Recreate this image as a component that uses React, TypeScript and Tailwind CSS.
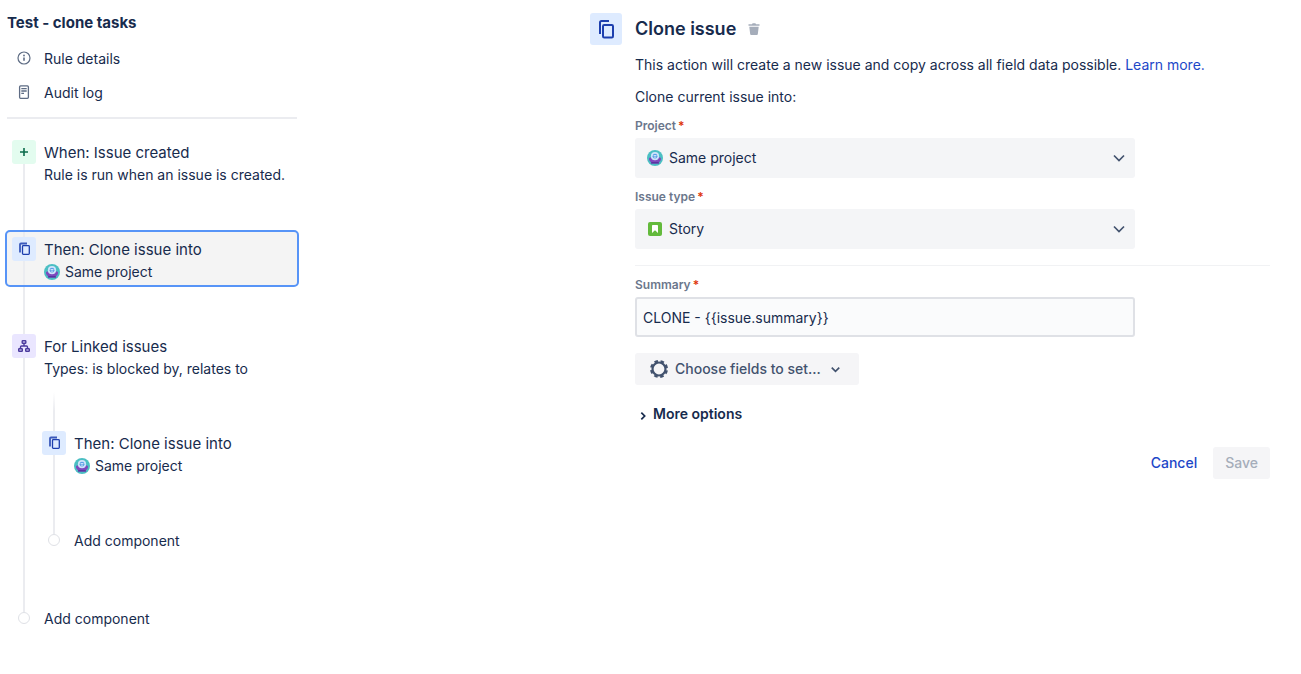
import React from "react";
import type { ReactNode } from "react";

function CopyIcon({ className }: { className: string }) {
  return (
    <svg viewBox="0 0 24 24" className={className} fill="none" stroke="#1d3fae" strokeWidth="2" aria-hidden="true">
      <path d="M6 17V5.500A1.500 1.500 0 0 1 7.500 4H15" />
      <rect x="9" y="8" width="10" height="12.500" rx="1.200" />
    </svg>
  );
}

function SmallCopyIcon() {
  return (
    <svg viewBox="0 0 24 24" className="size-6" fill="none" stroke="#1d3fae" aria-hidden="true">
      <path d="M8 15.500V7.500A1 1 0 0 1 9 6.500h6" strokeWidth="1.800" strokeOpacity="0.850" />
      <rect x="10.500" y="8.700" width="6.800" height="8.600" rx="0.800" strokeWidth="1.300" />
    </svg>
  );
}

function PlusIcon() {
  return (
    <svg viewBox="0 0 24 24" className="size-6" stroke="#0b6b4b" strokeWidth="1.6" aria-hidden="true">
      <path d="M12 8v8M8 12h8" />
    </svg>
  );
}

function BranchIcon() {
  return (
    <svg viewBox="0 0 24 24" className="size-6" fill="none" stroke="#4b3a9e" strokeWidth="1.4" aria-hidden="true">
      <rect x="10.2" y="6.7" width="3.6" height="2.6" rx="0.6" />
      <rect x="6.7" y="14.7" width="3.6" height="2.6" rx="0.6" />
      <rect x="13.7" y="14.7" width="3.6" height="2.6" rx="0.6" />
      <path d="M12 9.3V12M8.5 14.7V13a1 1 0 0 1 1-1h5a1 1 0 0 1 1 1v1.7" />
    </svg>
  );
}

function ProjectAvatar() {
  return (
    <svg viewBox="0 0 16 16" className="size-4 shrink-0" aria-hidden="true">
      <circle cx="8" cy="8" r="8" fill="#4bbfc3" />
      <path d="M2 8.400a1.300 1.300 0 0 1 1.600-.9h8.800a1.300 1.300 0 0 1 1.600.9c.2 1.900-.9 3.100-2.300 3.700l.6 1.500H3.700l.6-1.500C2.900 11.500 1.800 10.300 2 8.400z" fill="#7d48bd" />
      <path d="M4.500 12h7l.7 1.600H3.800z" fill="#5a349f" />
      <circle cx="8" cy="6.200" r="4.100" fill="#cfe3fa" />
      <circle cx="8" cy="6.200" r="2.400" fill="#5b9fe6" />
      <path d="M6.600 5.500h2.800M6.800 7.100h2.400" stroke="#e8f4ff" strokeWidth="0.800" />
    </svg>
  );
}

function StoryIcon() {
  return (
    <svg viewBox="0 0 16 16" className="size-4" aria-hidden="true">
      <rect x="1" y="1" width="14" height="14" rx="2" fill="#63ba3c" />
      <path d="M5 4.800a.8.8 0 0 1 .8-.8h4.400a.8.8 0 0 1 .8.800V12L8 9.300 5 12z" fill="#fff" />
    </svg>
  );
}

function Chevron({ className }: { className: string }) {
  return (
    <svg viewBox="0 0 12 12" className={className} fill="none" stroke="currentColor" aria-hidden="true">
      <path d="M1 3.500l5 5 5-5" />
    </svg>
  );
}

function Line({ className }: { className: string }) {
  return <div className={`w-0.5 bg-[#ebecf0] ${className}`} />;
}

function Gap({ className }: { className: string }) {
  return (
    <div className="flex w-[38px] justify-center">
      <Line className={className} />
    </div>
  );
}

type StepProps = {
  icon: ReactNode;
  tint: string;
  title: string;
  detail: ReactNode;
  first?: boolean;
  selected?: boolean;
};

function Step({ icon, tint, title, detail, first, selected }: StepProps) {
  return (
    <button
      type="button"
      className={`flex w-full gap-2 rounded-[5px] px-[7px] text-left ${
        selected ? "bg-[#f4f4f4] outline-2 -outline-offset-2 outline-[#5794f7]" : ""
      }`}
    >
      <span className="flex flex-col items-center self-stretch">
        <span className={`h-[7px] w-0.5 ${first ? "" : "bg-[#ebecf0]"}`} />
        <span className={`flex size-6 items-center justify-center rounded-[3px] ${tint}`}>{icon}</span>
        <span className="w-0.5 grow bg-[#ebecf0]" />
      </span>
      <span className="flex flex-col pt-2 pb-[5px]">
        <span className="text-[15px] leading-6">{title}</span>
        <span className="flex items-center gap-[5px] text-sm leading-5">{detail}</span>
      </span>
    </button>
  );
}

function AddComponent() {
  return (
    <button type="button" className="flex gap-2 px-[7px] text-sm leading-5">
      <span className="flex w-6 flex-col items-center">
        <span className="h-[3px] w-0.5 bg-[#ebecf0]" />
        <span className="size-3 rounded-full border border-[#dfe1e6] bg-white" />
      </span>
      Add component
    </button>
  );
}

function Sidebar() {
  const project = (
    <>
      <ProjectAvatar />
      Same project
    </>
  );
  return (
    <aside className="px-[5px] pt-[13px]">
      <div className="max-w-[294px]">
        <header className="mx-0.5 border-b-2 border-[#ebecf0] pb-[14px]">
          <h2 className="text-[15px] leading-5 font-bold">Test - clone tasks</h2>
          <nav className="mt-4 flex flex-col gap-[14px] text-sm leading-5">
            <a href="#details" className="flex items-center gap-3 pl-[9px]">
              <svg viewBox="0 0 16 16" className="size-4" fill="none" stroke="#5e6c84" strokeWidth="1.2" aria-hidden="true">
                <circle cx="8" cy="7" r="6" />
                <path d="M8 6.400v3.400" strokeWidth="1.600" />
                <circle cx="8" cy="4.500" r="0.900" fill="#5e6c84" stroke="none" />
              </svg>
              Rule details
            </a>
            <a href="#audit" className="flex items-center gap-3 pl-[9px]">
              <svg viewBox="0 0 16 16" className="size-4" fill="none" stroke="#5e6c84" strokeWidth="1.3" aria-hidden="true">
                <rect x="3.600" y="0.900" width="8.800" height="12.400" rx="1" />
                <path d="M5.300 3.700h5.400M5.300 6h5.400M5.300 8.300h2.700" />
              </svg>
              Audit log
            </a>
          </nav>
        </header>

        <section className="pt-[14px]">
          <Step
            first
            icon={<PlusIcon />}
            tint="bg-[#e3fcef]"
            title="When: Issue created"
            detail="Rule is run when an issue is created."
          />
          <Gap className="h-10" />
          <Step
            selected
            icon={<SmallCopyIcon />}
            tint="bg-[#deebff]"
            title="Then: Clone issue into"
            detail={project}
          />
          <Gap className="h-10" />
          <Step
            icon={<BranchIcon />}
            tint="bg-[#eae6ff]"
            title="For Linked issues"
            detail="Types: is blocked by, relates to"
          />
          <div className="flex pl-[18px]">
            <Line className="mr-[10px]" />
            <div className="grow pt-2 pb-[58px]">
              <div className="flex w-[38px] justify-center">
                <div className="h-8 w-0.5 bg-linear-to-b from-white to-[#ebecf0] to-60%" />
              </div>
              <Step
                icon={<SmallCopyIcon />}
                tint="bg-[#deebff]"
                title="Then: Clone issue into"
                detail={project}
              />
              <Gap className="h-[50px]" />
              <AddComponent />
            </div>
          </div>
          <AddComponent />
        </section>
      </div>
    </aside>
  );
}

function Label({ htmlFor, children }: { htmlFor: string; children: string }) {
  return (
    <label htmlFor={htmlFor} className="block text-xs leading-4 font-semibold text-[#6b778c]">
      {children}
      <span className="pl-0.5 text-[#de350b]">*</span>
    </label>
  );
}

function SelectField({ id, label, icon, value }: { id: string; label: string; icon: ReactNode; value: string }) {
  return (
    <div className="max-w-[500px]">
      <Label htmlFor={id}>{label}</Label>
      <div className="relative mt-1">
        <select
          id={id}
          defaultValue={value}
          className="block h-10 w-full appearance-none rounded-[3px] bg-[#f4f5f7] pr-10 pl-[34px] text-sm leading-5"
        >
          <option>{value}</option>
        </select>
        <span className="pointer-events-none absolute inset-y-0 left-3 flex items-center">{icon}</span>
        <span className="pointer-events-none absolute inset-y-0 right-[10px] flex items-center text-[#42526e]">
          <Chevron className="size-3 stroke-[1.7]" />
        </span>
      </div>
    </div>
  );
}

function Editor() {
  return (
    <main className="flex gap-3 pt-[13px] pr-[31px]">
      <div className="flex size-8 shrink-0 items-center justify-center rounded-[3px] bg-[#deebff]">
        <CopyIcon className="size-6" />
      </div>
      <form className="grow pl-px text-sm leading-5">
        <div className="flex h-8 items-center gap-3">
          <h1 className="text-lg leading-6 font-semibold">Clone issue</h1>
          <button type="button" aria-label="Delete">
            <svg viewBox="0 0 12 12" className="size-3" fill="#a5adba" aria-hidden="true">
              <path d="M0.500 1.300h3.500l.6-1h2.800l.6 1h3.500v1.500H.5zM1.300 3.700h9.400l-.9 7.500a1 1 0 0 1-1 .8H3.200a1 1 0 0 1-1-.8z" />
            </svg>
          </button>
        </div>
        <p className="mt-[10px]">
          This action will create a new issue and copy across all field data possible.{" "}
          <a href="#learn" className="text-[#1d47c8]">Learn more.</a>
        </p>
        <p className="mt-3">Clone current issue into:</p>
        <div className="mt-[11px] flex flex-col gap-[11px]">
          <SelectField id="project" label="Project" icon={<ProjectAvatar />} value="Same project" />
          <SelectField id="issue-type" label="Issue type" icon={<StoryIcon />} value="Story" />
        </div>
        <hr className="mt-4 border-[#f1f2f4]" />
        <div className="mt-[11px] max-w-[500px]">
          <Label htmlFor="summary">Summary</Label>
          <input
            id="summary"
            type="text"
            defaultValue="CLONE - {{issue.summary}}"
            className="mt-1 block h-10 w-full rounded-[3px] border-2 border-[#dfe1e6] bg-[#fafbfc] px-1.5"
          />
        </div>
        <button
          type="button"
          className="mt-4 flex h-8 items-center rounded-[3px] bg-[#f5f5f7] pr-[19px] pl-[14px] font-medium text-[#42526e]"
        >
          <svg viewBox="0 0 20 20" className="mr-1.5 size-5" fill="none" stroke="#42526e" aria-hidden="true">
            <circle cx="10" cy="10" r="6.500" strokeWidth="2.200" />
            <circle cx="10" cy="10" r="8" strokeWidth="2" strokeDasharray="3.600 2.683" strokeDashoffset="-1.340" />
          </svg>
          Choose fields to set...
          <Chevron className="ml-2.5 size-[9px] stroke-[2.2]" />
        </button>
        <button type="button" className="mt-[19px] flex items-center pl-1 font-semibold">
          <Chevron className="mt-1 mr-1.5 size-2 -rotate-90 stroke-[2.6]" />
          More options
        </button>
        <div className="mt-[23px] flex justify-end gap-1 font-medium">
          <button type="button" className="h-8 px-3 text-[#1d47c8]">Cancel</button>
          <button type="button" disabled className="h-8 rounded-[3px] bg-[#f5f5f7] px-3 text-[#a5adba]">Save</button>
        </div>
      </form>
    </main>
  );
}

export default function App() {
  return (
    <div className="grid min-h-screen grid-cols-[590fr_711fr] bg-white font-['Inter','Liberation_Sans',sans-serif] text-[#172b4d]">
      <Sidebar />
      <Editor />
    </div>
  );
}
